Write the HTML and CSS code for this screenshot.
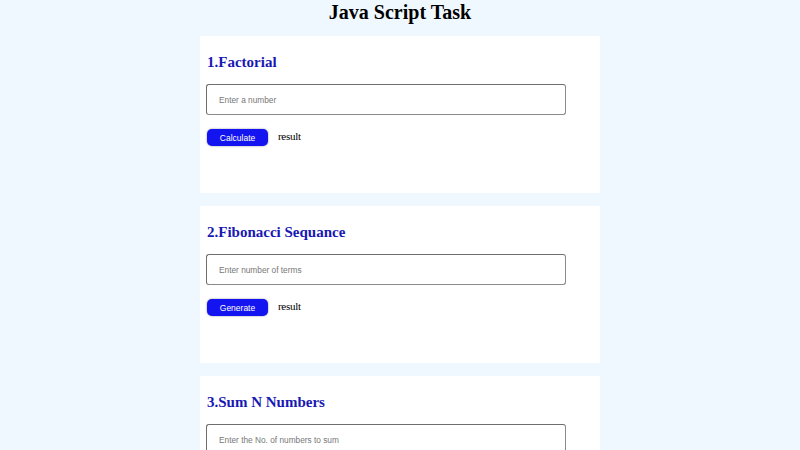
FILE: index.html
```html
<!DOCTYPE html>
<html>
<head>
<meta charset="utf-8">
<link rel="stylesheet" href="styles.css">
</head>
<body>
<h1 class="title">Java Script Task</h1>
<div class="tasks">
  <section class="card">
    <h2 class="card-title">1.Factorial</h2>
    <input class="field" type="text" placeholder="Enter a number">
    <div class="actions">
      <button class="btn">Calculate</button>
      <span class="result">result</span>
    </div>
  </section>
  <section class="card">
    <h2 class="card-title">2.Fibonacci Sequance</h2>
    <input class="field" type="text" placeholder="Enter number of terms">
    <div class="actions">
      <button class="btn">Generate</button>
      <span class="result">result</span>
    </div>
  </section>
  <section class="card">
    <h2 class="card-title">3.Sum N Numbers</h2>
    <input class="field" type="text" placeholder="Enter the No. of numbers to sum">
    <div class="actions">
      <button class="btn">Calculate</button>
      <span class="result">result</span>
    </div>
  </section>
</div>
</body>
</html>
```
FILE: styles.css
```css
* { box-sizing: border-box; }
body {
  margin: 0;
  background: #f0f8ff;
  font-family: "Liberation Serif", "Times New Roman", serif;
  color: #000;
}
.title {
  margin: 0;
  height: 36px;
  line-height: 24px;
  font-size: 20px;
  font-weight: bold;
  text-align: center;
}
.tasks {
  display: flex;
  flex-direction: column;
  align-items: center;
  gap: 13px;
}
.card {
  width: 400px;
  height: 157px;
  background: #fff;
  padding: 16px 7px 0 6px;
}
.card-title {
  margin: 0 0 12px 1px;
  font-size: 15px;
  line-height: 20px;
  color: #1818b4;
}
.field {
  display: block;
  width: 360px;
  height: 31px;
  border: 1px solid #8a8a8a;
  border-top-color: #6e6e6e;
  border-left-color: #6e6e6e;
  border-radius: 3px;
  padding: 0 12px;
  font-family: "Liberation Sans", Arial, sans-serif;
  font-size: 8.3px;
  background: #fff;
  outline: none;
}
.field::placeholder { color: #777; }
.actions {
  display: flex;
  align-items: center;
  gap: 10px;
  margin-top: 14px;
  padding-left: 1px;
}
.btn {
  width: 61px;
  height: 17px;
  border: none;
  border-radius: 5px;
  background: #1414f0;
  color: #fff;
  font-family: "Liberation Sans", Arial, sans-serif;
  font-size: 8.5px;
  padding: 0;
  box-shadow: 0 0 2px rgba(0,0,60,0.5);
}
.result {
  font-size: 11px;
  letter-spacing: -0.3px;
  margin-bottom: 3px;
}
```
